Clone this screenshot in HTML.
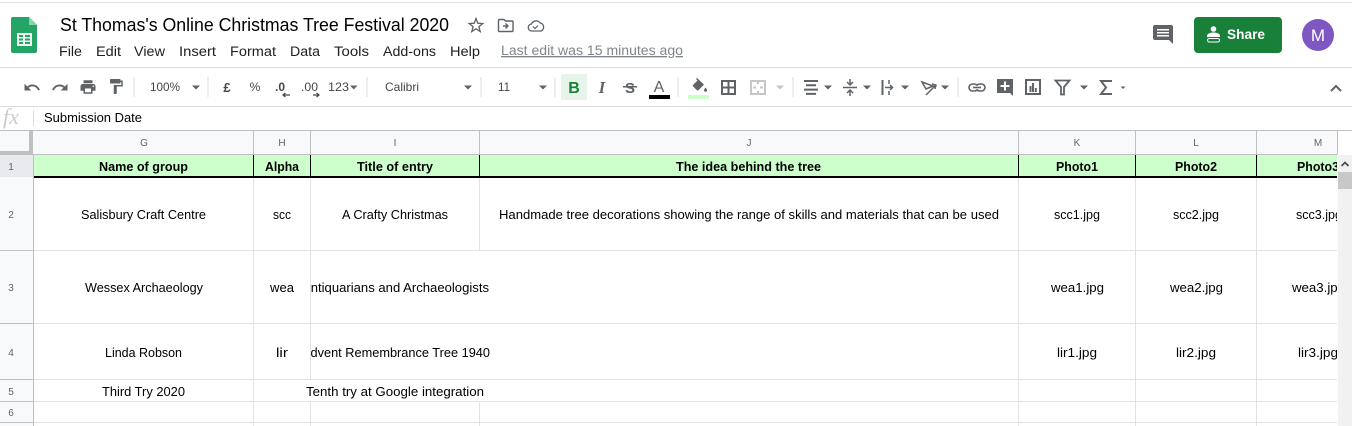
<!DOCTYPE html>
<html><head><meta charset="utf-8"><style>
html,body{margin:0;padding:0;background:#fff}
svg{display:block}
text{font-family:"Liberation Sans",sans-serif;white-space:pre}
.m{font-size:13.5px;fill:#202124}
.d{font-size:13px;fill:#000}
.h{font-size:13px;font-weight:bold;fill:#000}
.c{font-size:10px;fill:#5f6368;text-anchor:middle}
.r{font-size:10px;fill:#5f6368;text-anchor:middle}
.t{font-size:12px;fill:#444746}
.i{fill:#5f6368}
</style></head><body>
<svg width="1352" height="426" viewBox="0 0 1352 426" xmlns="http://www.w3.org/2000/svg">
<defs><clipPath id="ci"><rect x="311" y="251" width="800" height="128"/></clipPath><clipPath id="cm"><rect x="1257" y="155" width="80" height="271"/></clipPath></defs>
<rect width="1352" height="426" fill="#fff"/>
<rect y="2" width="1352" height="1" fill="#e3e3e3"/>

<!-- logo -->
<path d="M13 17h16l8 8v26a2 2 0 0 1-2 2H13a2 2 0 0 1-2-2V19a2 2 0 0 1 2-2z" fill="#23a566"/>
<path d="M29 17l8 8h-8z" fill="#8ed1b1"/>
<path d="M17 33h15v13H17z" fill="#f1f1f1"/>
<path d="M19 35h4v2h-4zM25 35h5v2h-5zM19 38.5h4v2h-4zM25 38.5h5v2h-5zM19 42h4v2h-4zM25 42h5v2h-5z" fill="#23a566"/>

<text x="60" y="31" font-size="18" fill="#000" textLength="389" lengthAdjust="spacingAndGlyphs">St Thomas's Online Christmas Tree Festival 2020</text>
<path d="M476 18.500l1.800 4.700 5 .3-3.900 3.200 1.300 4.800-4.200-2.700-4.200 2.700 1.300-4.800-3.900-3.200 5-.3z" fill="none" stroke="#5f6368" stroke-width="1.300"/>
<path d="M499.500 19.500h4.500l1.500 1.500h6.500a1 1 0 0 1 1 1v8.500a1 1 0 0 1-1 1h-12.500a1 1 0 0 1-1-1v-10a1 1 0 0 1 1-1z" fill="none" stroke="#5f6368" stroke-width="1.400"/>
<path d="M503 26h5M505.500 23.500l2.500 2.500-2.500 2.500" fill="none" stroke="#5f6368" stroke-width="1.400"/>
<path d="M532 31a3.500 3.500 0 0 1-.5-7 5 5 0 0 1 8.700-1 4.200 4.200 0 0 1 .8 8z" fill="none" stroke="#5f6368" stroke-width="1.300"/>
<path d="M533 26.500l2 2 3-3" fill="none" stroke="#5f6368" stroke-width="1.200"/>

<text class="m" x="59" y="56" textLength="23" lengthAdjust="spacingAndGlyphs">File</text>
<text class="m" x="96" y="56" textLength="25" lengthAdjust="spacingAndGlyphs">Edit</text>
<text class="m" x="134" y="56" textLength="31" lengthAdjust="spacingAndGlyphs">View</text>
<text class="m" x="179" y="56" textLength="37" lengthAdjust="spacingAndGlyphs">Insert</text>
<text class="m" x="230" y="56" textLength="46" lengthAdjust="spacingAndGlyphs">Format</text>
<text class="m" x="290" y="56" textLength="30" lengthAdjust="spacingAndGlyphs">Data</text>
<text class="m" x="334" y="56" textLength="35" lengthAdjust="spacingAndGlyphs">Tools</text>
<text class="m" x="383" y="56" textLength="53" lengthAdjust="spacingAndGlyphs">Add-ons</text>
<text class="m" x="450" y="56" textLength="30" lengthAdjust="spacingAndGlyphs">Help</text>
<text x="501" y="55" font-size="13.500" fill="#80868b" text-decoration="underline" textLength="182" lengthAdjust="spacingAndGlyphs">Last edit was 15 minutes ago</text>

<!-- top right -->
<path d="M1155 25h16a2 2 0 0 1 2 2v13l0 4-4-4h-14a2 2 0 0 1-2-2V27a2 2 0 0 1 2-2z" class="i"/>
<path d="M1157 29h12v1.500h-12zM1157 32h12v1.500h-12zM1157 35h12v1.500h-12z" fill="#fff"/>
<rect x="1194" y="17" width="88" height="36" rx="4" fill="#188038"/>
<circle cx="1213.500" cy="29" r="2.800" fill="#fff"/>
<path d="M1207 37v-1c0-2.500 3.500-3.500 6.500-3.500s6.500 1 6.500 3.500v1z" fill="#fff"/>
<rect x="1207.500" y="38.500" width="12" height="3.500" rx="1.700" fill="none" stroke="#fff" stroke-width="1"/>
<text x="1227" y="39" font-size="13.500" font-weight="bold" fill="#fff" textLength="38" lengthAdjust="spacingAndGlyphs">Share</text>
<circle cx="1318" cy="35" r="16" fill="#7e57c2"/>
<text x="1318" y="41" font-size="17" fill="#fff" text-anchor="middle">M</text>

<rect y="67" width="1352" height="1" fill="#dadce0"/>

<!-- toolbar -->
<g class="i">
<path transform="translate(23 78.500) scale(.75)" d="M12.500 8c-2.650 0-5.050.990-6.900 2.600L2 7v9h9l-3.620-3.620c1.390-1.160 3.160-1.880 5.120-1.880 3.540 0 6.550 2.310 7.600 5.500l2.370-.780C21.080 11.030 17.150 8 12.500 8z"/>
<path transform="translate(51 78.500) scale(.75)" d="M18.400 10.600C16.550 8.990 14.150 8 11.500 8c-4.650 0-8.580 3.030-9.960 7.220L3.900 16c1.050-3.190 4.050-5.500 7.600-5.500 1.950 0 3.730.720 5.120 1.880L13 16h9V7l-3.600 3.600z"/>
<path transform="translate(79 78) scale(.75)" d="M19 8H5c-1.660 0-3 1.340-3 3v6h4v4h12v-4h4v-6c0-1.660-1.340-3-3-3zm-3 11H8v-5h8v5zm3-7c-.550 0-1-.450-1-1s.450-1 1-1 1 .450 1 1-.450 1-1 1zm-1-9H6v4h12V3z"/>
<path transform="translate(107 77.500) scale(.75)" d="M18 4V3c0-.550-.450-1-1-1H5c-.550 0-1 .450-1 1v4c0 .550.450 1 1 1h12c.550 0 1-.450 1-1V6h1v4H9v11c0 .550.450 1 1 1h2c.550 0 1-.450 1-1v-9h8V4h-3z"/>
<!-- dropdown arrows -->
<path d="M192 85.500h8l-4 4zM464 85.500h8l-4 4zM539 85.500h8l-4 4zM824 85.500h8l-4 4zM863 85.500h8l-4 4zM901 85.500h8l-4 4zM941 85.500h8l-4 4zM1080 85.500h8l-4 4zM350 85.500h7.500l-3.750 4z"/>
<path d="M1120.500 86.500h5l-2.500 2.500z"/>
</g>
<path d="M134 77v20M208 77v20M367 77v20M481 77v20M555 77v20M678 77v20M793 77v20M958 77v20" stroke="#dadce0" stroke-width="1"/>
<text class="t" x="150" y="91" textLength="30" lengthAdjust="spacingAndGlyphs">100%</text>
<text class="t" x="227" y="92" font-weight="bold" text-anchor="middle" style="font-size:13px">£</text>
<text class="t" x="255" y="91" text-anchor="middle" style="font-size:12px">%</text>
<text class="t" x="275" y="91" font-weight="bold" textLength="10" lengthAdjust="spacingAndGlyphs">.0</text>
<text class="t" x="301" y="91" textLength="17" lengthAdjust="spacingAndGlyphs">.00</text>
<path d="M283 95h7M285.500 93l-2.500 2 2.500 2M313 95h6M316.500 93l2.500 2-2.500 2" fill="none" stroke="#444746" stroke-width="1.200"/>
<text class="t" x="328" y="91" textLength="21" lengthAdjust="spacingAndGlyphs">123</text>
<text class="t" x="385" y="91" textLength="34" lengthAdjust="spacingAndGlyphs">Calibri</text>
<text class="t" x="498" y="91" textLength="12" lengthAdjust="spacingAndGlyphs">11</text>
<rect x="561" y="74" width="26" height="26" rx="2" fill="#e6f4ea"/>
<text x="574" y="93" font-size="16" font-weight="bold" fill="#188038" text-anchor="middle">B</text>
<text x="602" y="93" font-size="16.500" font-weight="bold" font-style="italic" fill="#5f6368" text-anchor="middle" style="font-family:'Liberation Serif',serif">I</text>
<text x="630" y="93" font-size="15" font-weight="bold" fill="#5f6368" text-anchor="middle">S</text>
<rect x="623" y="86" width="14" height="1.500" fill="#5f6368"/>
<text x="659" y="92" font-size="16" fill="#5f6368" text-anchor="middle">A</text>
<rect x="649" y="95" width="21" height="4" fill="#000"/>
<path d="M697 78l-1 1 1.500 1.500-4.500 4.500a1 1 0 0 0 0 1.300l4 4a1 1 0 0 0 1.300 0l5.700-5.700z" class="i"/>
<path d="M705.500 87.500c-1 1.500-1.500 2-1.500 2.800a1.500 1.500 0 0 0 3 0c0-.8-.5-1.300-1.500-2.800z" class="i"/>
<rect x="688" y="95" width="21" height="4" fill="#ccffcc"/>
<path d="M722 81h13v13h-13zM728.500 81v13M722 87.500h13" fill="none" stroke="#5f6368" stroke-width="2"/>
<path d="M751 81h14v13h-14zM753 87.500h3M760 87.500h3M758 81v3M758 91v3" fill="none" stroke="#c4c6c8" stroke-width="2"/>
<path d="M776 85.500h8l-4 4z" fill="#c4c6c8"/>
<path d="M804 81h14M806 85.300h10M804 89.600h14M806 93.900h10" stroke="#5f6368" stroke-width="2"/>
<path d="M843 87.500h14" stroke="#5f6368" stroke-width="1.500"/>
<path d="M850 79v5M847 82l3 3 3-3M850 96v-5M847 93l3-3 3 3" fill="none" stroke="#5f6368" stroke-width="1.500"/>
<path d="M882.500 80v15" stroke="#5f6368" stroke-width="2"/>
<path d="M889 80v4M889 91v4M885 87.500h8M890 85l2.500 2.500-2.500 2.500" fill="none" stroke="#5f6368" stroke-width="1.500"/>
<path d="M922 82l11 4-7 3zM926 95l10-10M932 84l4 1-1 4" fill="none" stroke="#5f6368" stroke-width="1.500"/>
<rect x="969" y="84" width="9" height="7" rx="3.500" fill="none" stroke="#5f6368" stroke-width="1.600"/>
<rect x="976" y="84" width="9" height="7" rx="3.500" fill="none" stroke="#5f6368" stroke-width="1.600"/>
<path d="M973 87.500h8" stroke="#fff" stroke-width="3.500"/>
<path d="M973 87.500h8" stroke="#5f6368" stroke-width="1.600"/>
<path d="M997 79h16v16l0 1-3-3h-13z" class="i"/>
<path d="M1004 81.500h2v3.500h3.500v2H1006v3.500h-2V87h-3.500v-2h3.500z" fill="#fff"/>
<rect x="1026" y="80" width="14" height="14" fill="none" stroke="#5f6368" stroke-width="2"/>
<path d="M1029.500 86h2v6h-2zM1032 83h2v9h-2zM1034.800 88h2v4h-2z" class="i"/>
<path d="M1055.500 80.500h14l-5.500 6.500v7.500h-3V87z" fill="none" stroke="#5f6368" stroke-width="1.800"/>
<path d="M1112 81h-11l5 6.500-5 6.500h11" fill="none" stroke="#5f6368" stroke-width="2"/>
<path d="M1331 91l5-5 5 5" fill="none" stroke="#5f6368" stroke-width="2"/>

<rect y="106" width="1352" height="1" fill="#dadce0"/>
<!-- formula bar -->
<text x="3" y="124" font-size="22" font-style="italic" fill="#c9cbcd" style="font-family:'Liberation Serif',serif">fx</text>
<rect x="33" y="110" width="1" height="16" fill="#dadce0"/>
<text x="44" y="122" font-size="12.500" fill="#000" textLength="98" lengthAdjust="spacingAndGlyphs">Submission Date</text>

<!-- headers -->
<rect y="130" width="1338" height="25" fill="#f8f9fa"/>
<rect y="130" width="1352" height="1" fill="#c0c0c0"/>
<rect y="131" x="1338" width="14" height="24" fill="#fff"/>
<rect y="154" x="33" width="1305" height="1" fill="#c0c0c0"/>
<rect x="0" y="155" width="33" height="271" fill="#f8f9fa"/>
<rect x="0" y="155" width="33" height="22" fill="#e8eaed"/>
<rect x="29" y="131" width="4" height="24" fill="#c0c0c0"/>
<rect x="0" y="151" width="33" height="4" fill="#c0c0c0"/>
<path d="M253.500 131v24M310.500 131v24M479.500 131v24M1018.500 131v24M1135.500 131v24M1256.500 131v24M1337.500 131v24" stroke="#c0c0c0"/>
<text class="c" x="144" y="146">G</text>
<text class="c" x="282" y="146">H</text>
<text class="c" x="395" y="146">I</text>
<text class="c" x="749" y="146">J</text>
<text class="c" x="1077" y="146">K</text>
<text class="c" x="1196" y="146">L</text>
<text class="c" x="1318" y="146">M</text>

<!-- row 1 -->
<rect x="34" y="155" width="1303" height="22" fill="#ccffcc"/>
<path d="M253.500 155v22M310.500 155v22M479.500 155v22M1018.500 155v22M1135.500 155v22M1256.500 155v22" stroke="#000"/>
<rect x="33" y="176" width="1304" height="2" fill="#000"/>

<!-- grid -->
<g stroke="#e2e3e3">
<path d="M253.500 178v248M1018.500 178v248M1135.500 178v248M1256.500 178v248"/>
<path d="M310.500 178v201M310.500 402v24M479.500 178v72M479.500 402v24"/>
<path d="M34 250.500h1303M34 323.500h1303M34 379.500h1303M34 401.500h1303M34 422.500h1303"/>
</g>
<rect x="33" y="155" width="1" height="271" fill="#c0c0c0"/>
<path d="M0 250.500h33M0 323.500h33M0 379.500h33M0 401.500h33M0 422.500h33" stroke="#c0c0c0"/>

<text class="r" x="11" y="170">1</text>
<text class="r" x="11" y="218">2</text>
<text class="r" x="11" y="291">3</text>
<text class="r" x="11" y="356">4</text>
<text class="r" x="11" y="395">5</text>
<text class="r" x="11" y="416">6</text>

<text class="h" x="99" y="171" textLength="89" lengthAdjust="spacingAndGlyphs">Name of group</text>
<text class="h" x="265" y="171" textLength="34" lengthAdjust="spacingAndGlyphs">Alpha</text>
<text class="h" x="357" y="171" textLength="76" lengthAdjust="spacingAndGlyphs">Title of entry</text>
<text class="h" x="676" y="171" textLength="145" lengthAdjust="spacingAndGlyphs">The idea behind the tree</text>
<text class="h" x="1056" y="171" textLength="42" lengthAdjust="spacingAndGlyphs">Photo1</text>
<text class="h" x="1175" y="171" textLength="42" lengthAdjust="spacingAndGlyphs">Photo2</text>
<text class="h" x="1297" y="171" textLength="42" lengthAdjust="spacingAndGlyphs" clip-path="url(#cm)">Photo3</text>

<text class="d" x="81" y="219" textLength="125" lengthAdjust="spacingAndGlyphs">Salisbury Craft Centre</text>
<text class="d" x="273" y="219" textLength="18" lengthAdjust="spacingAndGlyphs">scc</text>
<text class="d" x="342" y="219" textLength="106" lengthAdjust="spacingAndGlyphs">A Crafty Christmas</text>
<text class="d" x="499" y="219" textLength="500" lengthAdjust="spacingAndGlyphs">Handmade tree decorations showing the range of skills and materials that can be used</text>
<text class="d" x="1054" y="219" textLength="46" lengthAdjust="spacingAndGlyphs">scc1.jpg</text>
<text class="d" x="1173" y="219" textLength="46" lengthAdjust="spacingAndGlyphs">scc2.jpg</text>
<text class="d" x="1296" y="219" textLength="46" lengthAdjust="spacingAndGlyphs" clip-path="url(#cm)">scc3.jpg</text>

<text class="d" x="85" y="292" textLength="118" lengthAdjust="spacingAndGlyphs">Wessex Archaeology</text>
<text class="d" x="270" y="292" textLength="24" lengthAdjust="spacingAndGlyphs">wea</text>
<text class="d" x="302" y="292" textLength="187" lengthAdjust="spacingAndGlyphs" clip-path="url(#ci)">Antiquarians and Archaeologists</text>
<text class="d" x="1051" y="292" textLength="53" lengthAdjust="spacingAndGlyphs">wea1.jpg</text>
<text class="d" x="1170" y="292" textLength="53" lengthAdjust="spacingAndGlyphs">wea2.jpg</text>
<text class="d" x="1292" y="292" textLength="53" lengthAdjust="spacingAndGlyphs" clip-path="url(#cm)">wea3.jpg</text>

<text class="d" x="105" y="357" textLength="77" lengthAdjust="spacingAndGlyphs">Linda Robson</text>
<text class="d" x="276" y="357" textLength="12" lengthAdjust="spacingAndGlyphs">lir</text>
<text class="d" x="302" y="357" textLength="188" lengthAdjust="spacingAndGlyphs" clip-path="url(#ci)">Advent Remembrance Tree 1940</text>
<text class="d" x="1057" y="357" textLength="40" lengthAdjust="spacingAndGlyphs">lir1.jpg</text>
<text class="d" x="1176" y="357" textLength="40" lengthAdjust="spacingAndGlyphs">lir2.jpg</text>
<text class="d" x="1298" y="357" textLength="40" lengthAdjust="spacingAndGlyphs" clip-path="url(#cm)">lir3.jpg</text>

<text class="d" x="102" y="396" textLength="83" lengthAdjust="spacingAndGlyphs">Third Try 2020</text>
<text class="d" x="306" y="396" textLength="178" lengthAdjust="spacingAndGlyphs">Tenth try at Google integration</text>

<!-- scrollbar -->
<rect x="1338" y="155" width="14" height="271" fill="#f1f1f1"/>
<rect x="1338" y="172" width="14" height="17" fill="#c8c8c8"/>
<path d="M1341.500 166l3.500-3.500 3.500 3.500" fill="none" stroke="#505050" stroke-width="1.800"/>
</svg>
</body></html>
